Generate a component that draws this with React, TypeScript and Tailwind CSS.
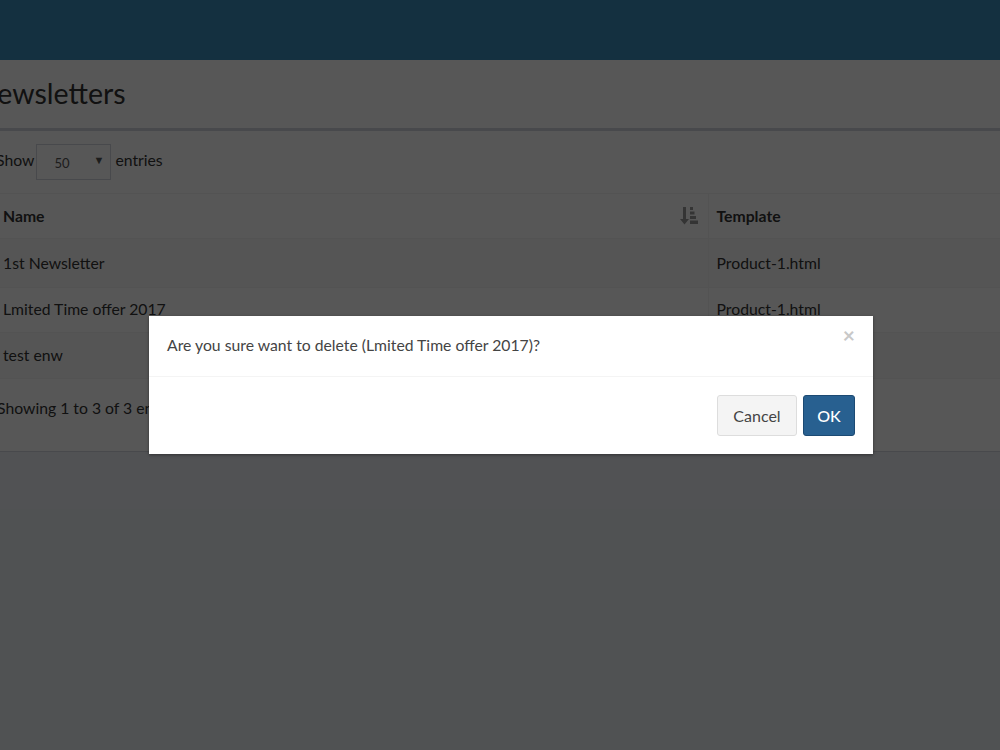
const rows = [
  { name: '1st Newsletter', template: 'Product-1.html', height: 'h-[49px]', stripe: true, cell: '' },
  { name: 'Lmited Time offer 2017', template: 'Product-1.html', height: 'h-[45px]', stripe: false, cell: 'pb-[2px]' },
  { name: 'test enw', template: 'Product-1.html', height: 'h-[46px]', stripe: true, cell: 'pb-[2px]' },
];

function SortIcon() {
  return (
    <svg viewBox="0 0 18 18" className="h-[18px] w-[18px] fill-[#999]">
      <path d="M3 0h3v12h3l-4.5 5.5L0 12h3z" />
      <rect x="10" y="0" width="3" height="3" />
      <rect x="10" y="4.5" width="4.5" height="3" />
      <rect x="10" y="9" width="6" height="3" />
      <rect x="10" y="13.5" width="8" height="3.5" />
    </svg>
  );
}

export default function App() {
  return (
    <div className="relative h-[750px] w-[1000px] overflow-hidden bg-[#ecf0f5] font-['Lato','Liberation_Sans',sans-serif] text-[15.75px] text-[#333]">
      {/* Top bar */}
      <div className="h-[60px] bg-[#3c8dbc]" />

      {/* Page content, scrolled a little past the left edge */}
      <div className="-ml-[23px] w-[1100px]">
        <div className="flex h-[71px] items-center border-b-[3px] border-[#d2d6de] bg-white pb-[2px]">
          <h1 className="-ml-[1px] text-[28.5px] leading-none">Newsletters</h1>
        </div>

        <div className="h-[321px] border-b border-[#d2d6de] bg-white">
          {/* Length control */}
          <div className="flex h-[62px] items-center pl-[19px]">
            <span className="-mt-1">Show</span>
            <div className="ml-[2px] flex h-[36px] w-[75px] items-center justify-between border border-[#d2d6de] pl-[17px] pr-[6px] text-[13px] text-[#555]">
              <span className="pt-1">50</span>
              <span className="-mt-[3px] text-[11px]">▼</span>
            </div>
            <span className="-mt-1 ml-1">entries</span>
          </div>

          <table className="w-full table-fixed border-collapse">
            <thead>
              <tr className="h-[45px] border-y border-[#f4f4f4]">
                <th className="w-[731px] pl-[26px] pr-[10px] text-left font-bold">
                  <div className="flex items-center justify-between">
                    <span>Name</span>
                    <SortIcon />
                  </div>
                </th>
                <th className="border-l border-[#f4f4f4] pl-[8px] text-left font-bold">Template</th>
              </tr>
            </thead>
            <tbody>
              {rows.map((row) => (
                <tr key={row.name} className={`${row.height} border-b border-[#f4f4f4] ${row.stripe ? 'bg-[#f9f9f9]' : ''}`}>
                  <td className={`${row.cell} pl-[26px]`}>{row.name}</td>
                  <td className={`${row.cell} border-l border-[#f4f4f4] pl-[8px]`}>{row.template}</td>
                </tr>
              ))}
            </tbody>
          </table>

          <div className="pl-[20px] pt-[17px]">Showing 1 to 3 of 3 entries</div>
        </div>
      </div>

      {/* Backdrop */}
      <div className="absolute inset-0 bg-black/[0.66]" />

      {/* Confirm dialog */}
      <div className="absolute left-[149px] top-[316px] w-[724px] bg-white text-[#444] shadow-[0_1px_3px_rgba(0,0,0,0.4)]">
        <div className="relative flex h-[61px] items-center border-b border-[#f4f4f4] pb-[2px] pl-[18px]">
          <p>Are you sure want to delete (Lmited Time offer 2017)?</p>
          <span className="absolute right-[18px] top-[5px] text-[21px] font-bold leading-7 text-[#c8c8c8]">×</span>
        </div>
        <div className="flex h-[77px] items-start justify-end gap-[6px] pr-[18px] pt-[18px] text-[16px]">
          <button className="h-[41px] w-[80px] rounded-[3px] border border-[#ddd] bg-[#f4f4f4] text-[#444]">Cancel</button>
          <button className="h-[41px] w-[52px] rounded-[3px] border border-[#1c4a73] bg-[#286090] font-medium text-white">OK</button>
        </div>
      </div>
    </div>
  );
}
